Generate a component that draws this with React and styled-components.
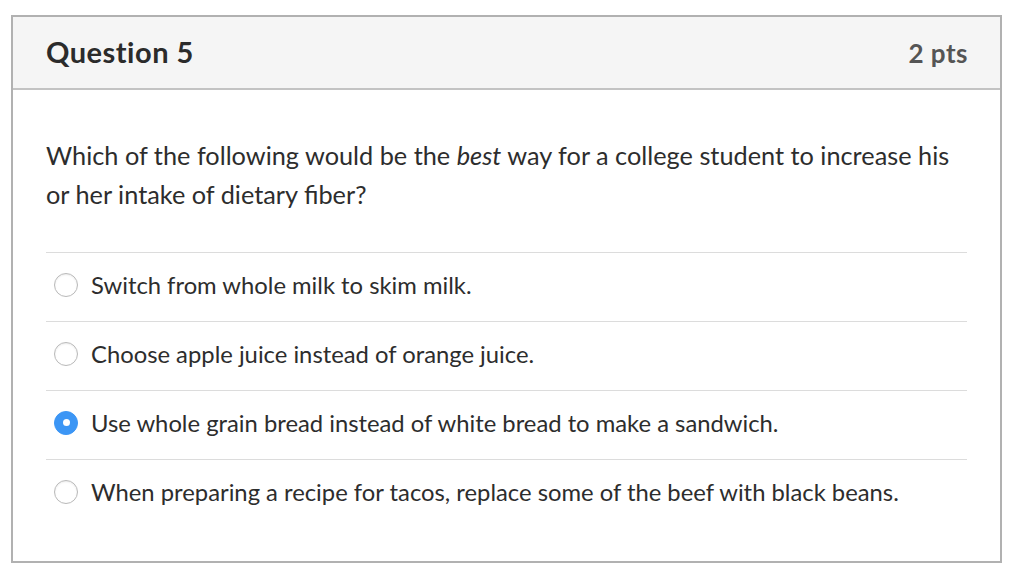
import React from 'react'
import styled, { createGlobalStyle } from 'styled-components'

const GlobalStyle = createGlobalStyle`
  html, body {
    margin: 0;
    padding: 0;
    background: #fff;
  }
  body {
    font-family: Lato, "Liberation Sans", sans-serif;
    color: #2d2d2d;
  }
`

const answers = [
  { text: 'Switch from whole milk to skim milk.' },
  { text: 'Choose apple juice instead of orange juice.' },
  { text: 'Use whole grain bread instead of white bread to make a sandwich.', checked: true },
  { text: 'When preparing a recipe for tacos, replace some of the beef with black beans.' },
]

function App() {
  return (
    <Page>
      <GlobalStyle />
      <Card>
        <Header>
          <Title>Question 5</Title>
          <Points>2 pts</Points>
        </Header>
        <Body>
          <Prompt>
            Which of the following would be the <em>best</em> way for a college student to increase his
            or her intake of dietary fiber?
          </Prompt>
          <Answers>
            {answers.map((a) => (
              <Answer key={a.text}>
                <Radio checked={a.checked} />
                <AnswerText>{a.text}</AnswerText>
              </Answer>
            ))}
          </Answers>
        </Body>
      </Card>
    </Page>
  )
}

export default App

const Page = styled.div`
  padding: 15px 22px 10px 11px;
`

const Card = styled.div`
  width: 991px;
  height: 548px;
  box-sizing: border-box;
  border: 2px solid #b1b1b1;
  display: flex;
  flex-direction: column;
`

const Header = styled.div`
  height: 73px;
  box-sizing: border-box;
  background: #f5f5f5;
  border-bottom: 2px solid #c3c3c3;
  display: flex;
  align-items: center;
  justify-content: space-between;
  padding: 0 33px 0 33px;
`

const Title = styled.div`
  font-size: 29px;
  font-weight: 700;
  letter-spacing: 0.5px;
  color: #2b2b2b;
  margin-top: -3px;
`

const Points = styled.div`
  font-size: 26px;
  font-weight: 700;
  letter-spacing: 0.5px;
  margin-right: -1px;
  color: #555;
`

const Body = styled.div`
  padding: 46px 33px 0 33px;
`

const Prompt = styled.p`
  margin: 0;
  font-size: 25.3px;
  line-height: 39px;
  color: #2d2d2d;
  max-width: 915px;
  em {
    font-style: italic;
  }
`

const Answers = styled.div`
  margin-top: 38px;
`

const Answer = styled.div`
  height: 69px;
  box-sizing: border-box;
  border-top: 1.5px solid #dcdcdc;
  display: flex;
  align-items: center;
  padding-left: 8px;
  padding-bottom: 5px;
`

const Radio = styled.span`
  width: 24px;
  height: 24px;
  box-sizing: border-box;
  border-radius: 50%;
  flex: none;
  ${(p) =>
    p.checked
      ? `
    background: #3c96f5;
    border: 1px solid #3c96f5;
    display: flex;
    align-items: center;
    justify-content: center;
    &::after {
      content: '';
      width: 7px;
      height: 7px;
      border-radius: 50%;
      background: #fff;
    }
  `
      : `
    background: #fff;
    border: 1px solid #b9b9b9;
    box-shadow: inset 0 1px 2px rgba(0,0,0,0.08);
  `}
`

const AnswerText = styled.span`
  margin-left: 13px;
  font-size: 23.8px;
  color: #2d2d2d;
`
